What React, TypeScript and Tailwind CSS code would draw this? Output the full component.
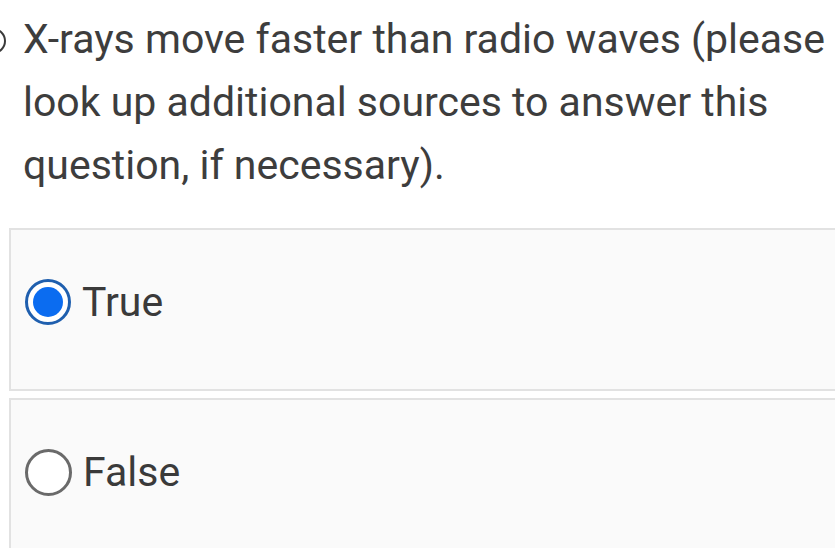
import React, { useState } from 'react';

const options = ['True', 'False'];

const App: React.FC = () => {
  const [selected, setSelected] = useState('True');

  return (
    <div className="w-[835px] h-[548px] overflow-hidden bg-white font-['Roboto','Liberation_Sans',sans-serif]">
      <div className="flex items-start pt-[8px]">
        <div className="mt-[20px] -ml-[20px] w-[26px] h-[26px] shrink-0 rounded-full border-2 border-[#3a3a3a]" />
        <p className="ml-[17px] text-[41px] leading-[63px] text-[#3d3d3d]">
          X-rays move faster than radio waves (please look up additional sources to answer this question, if necessary).
        </p>
      </div>

      <div className="ml-[9px] mt-[31px] flex flex-col gap-[7px]">
        {options.map(option => {
          const checked = selected === option;
          return (
            <label
              key={option}
              onClick={() => setSelected(option)}
              className="w-[840px] h-[163px] shrink-0 flex items-center gap-[11px] pl-[14px] pb-[15px] bg-[#fafafa] border-2 border-[#e2e2e2] cursor-pointer"
            >
              {checked ? (
                <span className="w-[46px] h-[46px] shrink-0 rounded-full border-[3px] border-[#1f5fae] bg-white flex items-center justify-center">
                  <span className="w-[30px] h-[30px] rounded-full bg-[#0b6cf0]" />
                </span>
              ) : (
                <span className="w-[47px] h-[47px] shrink-0 rounded-full border-[3px] border-[#6a6a6a] bg-white" />
              )}
              <span className="text-[41px] leading-none text-[#3a3a3a]">{option}</span>
            </label>
          );
        })}
      </div>
    </div>
  );
};

export default App;
